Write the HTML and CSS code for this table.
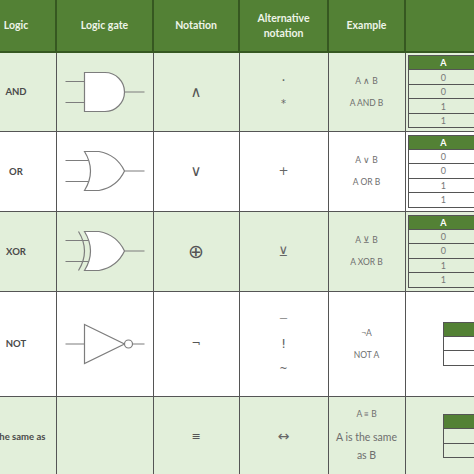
FILE: index.html
```html
<!DOCTYPE html>
<html>
<head>
<meta charset="utf-8">
<link rel="stylesheet" href="styles.css">
</head>
<body>
<div class="sheet">
<table class="logic">
  <colgroup>
    <col class="c-name"><col class="c-gate"><col class="c-sym"><col class="c-alt"><col class="c-ex"><col class="c-tt">
  </colgroup>
  <thead>
    <tr class="head">
      <th>Logic</th><th>Logic gate</th><th>Notation</th><th>Alternative<br>notation</th><th>Example</th><th></th>
    </tr>
  </thead>
  <tbody>
    <tr class="g r-and">
      <td class="name">AND</td>
      <td class="gate">
        <svg class="gate-svg" width="80" height="42" viewBox="0 0 80 42">
          <path d="M0.5 10.5H19.5M0.5 31.5H19.5M59.5 21H79.5"/>
          <path class="body" d="M19.5 1.5H40A19.5 19.5 0 0 1 40 40.5H19.5Z"/>
        </svg>
      </td>
      <td class="sym">∧</td>
      <td class="alt"><div class="stack s24"><span class="dot">·</span><span>*</span></div></td>
      <td class="ex"><div class="stack"><span>A ∧ B</span><span>A AND B</span></div></td>
      <td class="tt">
        <table class="truth">
          <tr><th>A</th><th></th><th></th></tr>
          <tr><td>0</td><td></td><td></td></tr>
          <tr><td>0</td><td></td><td></td></tr>
          <tr><td>1</td><td></td><td></td></tr>
          <tr><td>1</td><td></td><td></td></tr>
        </table>
      </td>
    </tr>
    <tr class="w r-or">
      <td class="name">OR</td>
      <td class="gate">
        <svg class="gate-svg" width="80" height="42" viewBox="0 0 80 42">
          <path d="M0.5 10.5H23.8M0.5 31.5H23.8M59.5 21H79.5"/>
          <path class="body" d="M19.5 1.5Q31.5 21 19.5 40.5H34Q52 37 59.5 21Q52 5 34 1.5Z"/>
        </svg>
      </td>
      <td class="sym">∨</td>
      <td class="alt"><span class="plus">+</span></td>
      <td class="ex"><div class="stack"><span>A ∨ B</span><span>A OR B</span></div></td>
      <td class="tt">
        <table class="truth">
          <tr><th>A</th><th></th><th></th></tr>
          <tr><td>0</td><td></td><td></td></tr>
          <tr><td>0</td><td></td><td></td></tr>
          <tr><td>1</td><td></td><td></td></tr>
          <tr><td>1</td><td></td><td></td></tr>
        </table>
      </td>
    </tr>
    <tr class="g r-xor">
      <td class="name">XOR</td>
      <td class="gate">
        <svg class="gate-svg" width="80" height="42" viewBox="0 0 80 42">
          <path d="M0.5 10.5H23.8M0.5 31.5H23.8M59.5 21H79.5"/>
          <path d="M13.5 1.5Q25.5 21 13.5 40.5"/>
          <path class="body" d="M19.5 1.5Q31.5 21 19.5 40.5H34Q52 37 59.5 21Q52 5 34 1.5Z"/>
        </svg>
      </td>
      <td class="sym big">⊕</td>
      <td class="alt"><span class="xv">⊻</span></td>
      <td class="ex"><div class="stack"><span>A ⊻ B</span><span>A XOR B</span></div></td>
      <td class="tt">
        <table class="truth">
          <tr><th>A</th><th></th><th></th></tr>
          <tr><td>0</td><td></td><td></td></tr>
          <tr><td>0</td><td></td><td></td></tr>
          <tr><td>1</td><td></td><td></td></tr>
          <tr><td>1</td><td></td><td></td></tr>
        </table>
      </td>
    </tr>
    <tr class="w r-not">
      <td class="name">NOT</td>
      <td class="gate">
        <svg class="gate-svg" width="80" height="42" viewBox="0 0 80 42">
          <path d="M0.5 21H19.5M67.5 21H79.5"/>
          <path class="body" d="M19.5 1.5L59.5 21L19.5 40.5Z"/>
          <circle cx="63.5" cy="21" r="4"/>
        </svg>
      </td>
      <td class="sym small">¬</td>
      <td class="alt"><div class="stack s25"><span class="bar">—</span><span class="bang">!</span><span>~</span></div></td>
      <td class="ex"><div class="stack"><span>¬A</span><span>NOT A</span></div></td>
      <td class="tt">
        <table class="truth two">
          <tr><th>A</th><th></th></tr>
          <tr><td>0</td><td></td></tr>
          <tr><td>1</td><td></td></tr>
        </table>
      </td>
    </tr>
    <tr class="g r-eq">
      <td class="name">Is the same as</td>
      <td class="gate"></td>
      <td class="sym small">≡</td>
      <td class="alt"><span class="arrow">↔</span></td>
      <td class="ex"><div class="stack"><span>A ≡ B</span><span class="long">A is the same as B</span></div></td>
      <td class="tt">
        <table class="truth two">
          <tr><th>A</th><th></th></tr>
          <tr><td>0</td><td></td></tr>
          <tr><td>1</td><td></td></tr>
        </table>
      </td>
    </tr>
  </tbody>
</table>
</div>
</body>
</html>
```

FILE: styles.css
```css
html, body {
  margin: 0;
  padding: 0;
  overflow: hidden;
  background: #ffffff;
}
body {
  font-family: Lato, "Liberation Sans", sans-serif;
  width: 474px;
  height: 474px;
}
.sheet {
  margin-left: -25px;
}
.logic {
  border-collapse: collapse;
  table-layout: fixed;
  width: 645px;
}
.c-name { width: 80px; }
.c-gate { width: 97px; }
.c-sym { width: 86px; }
.c-alt { width: 89px; }
.c-ex { width: 77px; }
.c-tt { width: 216px; }

.head th {
  height: 51px;
  padding: 0;
  background: #538135;
  color: #eef4e8;
  font-weight: 700;
  font-size: 10.5px;
  line-height: 15px;
  border-left: 2px solid #365821;
  border-bottom: 2px solid #365821;
  text-align: center;
  vertical-align: middle;
}

.logic > tbody > tr > td {
  padding: 0;
  border: 1.5px solid #555555;
  text-align: center;
  vertical-align: middle;
  color: #6e6e6e;
  font-size: 8.5px;
}
.logic > tbody > tr.g > td { background: #e2efda; }
.logic > tbody > tr.w > td { background: #ffffff; }

.r-and { height: 79px; }
.r-or { height: 80px; }
.r-xor { height: 80px; }
.r-not { height: 105px; }
.r-eq { height: 80px; }

.logic > tbody > tr > td.name {
  font-size: 9.5px;
  font-weight: 700;
  color: #4a4a4a;
}
.gate-svg {
  display: block;
  margin: 0 auto;
  fill: none;
  stroke: #7d7d7d;
  stroke-width: 1.2;
}
.gate-svg .body, .gate-svg circle { fill: #ffffff; }

.logic > tbody > tr > td.sym {
  font-family: "DejaVu Sans", sans-serif;
  font-size: 15px;
  color: #555555;
}
.logic > tbody > tr > td.sym.big { font-size: 19px; }
.logic > tbody > tr > td.sym.small { font-size: 11px; }

.logic > tbody > tr > td.alt {
  font-family: "DejaVu Sans", sans-serif;
  font-size: 10px;
  color: #666666;
}
.dot { font-size: 14px; }
.plus { font-size: 12px; }
.xv { font-size: 13px; }
.bang { font-size: 13px; }
.bar { font-size: 8px; }
.arrow { font-size: 14px; }

.stack {
  display: flex;
  flex-direction: column;
  align-items: center;
  gap: 10px;
  line-height: 12px;
}
.s24 { gap: 12px; }
.s25 { gap: 13px; }
.long {
  font-size: 10.5px;
  line-height: 18px;
  width: 70px;
  margin-top: -2px;
}

.truth {
  border-collapse: collapse;
  table-layout: fixed;
  width: 210px;
  margin: 0 auto;
}
.truth.two { width: 140px; }
.truth th {
  height: 13px;
  padding: 0;
  background: #538135;
  color: #ffffff;
  font-size: 9px;
  font-weight: 700;
  border: 1px solid #555555;
  line-height: 13px;
}
.truth td {
  height: 13.5px;
  padding: 0;
  border: 1px solid #555555;
  font-size: 9px;
  color: #777777;
  line-height: 13px;
  text-align: center;
}
```
